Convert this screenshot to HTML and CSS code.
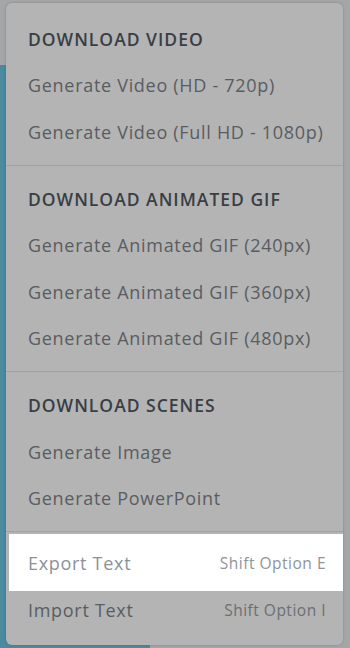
FILE: index.html
```html
<!DOCTYPE html>
<html>
<head>
<meta charset="utf-8">
<link rel="stylesheet" href="styles.css">
</head>
<body>
<div class="page">
  <div class="menu">
    <div class="section first">
      <div class="row header">DOWNLOAD VIDEO</div>
      <div class="row item">Generate Video (HD - 720p)</div>
      <div class="row item">Generate Video (Full HD - 1080p)</div>
    </div>
    <div class="section">
      <div class="row header">DOWNLOAD ANIMATED GIF</div>
      <div class="row item">Generate Animated GIF (240px)</div>
      <div class="row item">Generate Animated GIF (360px)</div>
      <div class="row item">Generate Animated GIF (480px)</div>
    </div>
    <div class="section">
      <div class="row header">DOWNLOAD SCENES</div>
      <div class="row item">Generate Image</div>
      <div class="row item">Generate PowerPoint</div>
    </div>
    <div class="section last">
      <div class="row item active"><span>Export Text</span><span class="shortcut">Shift Option E</span></div>
      <div class="row item import"><span>Import Text</span><span class="shortcut">Shift Option I</span></div>
    </div>
  </div>
</div>
</body>
</html>
```

FILE: styles.css
```css
html, body {
  margin: 0;
  padding: 0;
}
body {
  width: 350px;
  height: 648px;
  overflow: hidden;
  background: linear-gradient(#4b8ba0, #4b8ba0) no-repeat 0 65px / 150px 100%, #a4a6a8;
  font-family: "Open Sans", "Liberation Sans", sans-serif;
}
.page {
  padding: 3px 7px 3px 6px;
}
.menu {
  background: #b4b4b4;
  border-radius: 6px;
  height: 642px;
  box-sizing: border-box;
  padding-top: 2.5px;
  box-shadow: 0 0 3px rgba(0,0,0,0.2);
}
.section {
  padding: 9.75px 0;
  border-top: 1px solid #a2a2a2;
}
.section.first {
  border-top: none;
}
.section.last {
  padding: 2px 0 0 0;
}
.row {
  height: 46.5px;
  display: flex;
  align-items: center;
  padding: 0 17px 0 22px;
  box-sizing: border-box;
  white-space: nowrap;
}
.header {
  font-size: 17.5px;
  font-weight: 600;
  color: #383e44;
  letter-spacing: 1px;
}
.item {
  font-size: 18px;
  letter-spacing: 0.7px;
  color: #595d62;
  justify-content: space-between;
}
.item.active {
  height: 57px;
  background: #ffffff;
  color: #8b9198;
  margin-left: 3px;
  padding-left: 19px;
}
.item.import {
  height: 38px;
}
.shortcut {
  font-size: 15.5px;
  letter-spacing: 0.5px;
  color: #6b6f73;
}
.active .shortcut {
  color: #8e949b;
}
```
